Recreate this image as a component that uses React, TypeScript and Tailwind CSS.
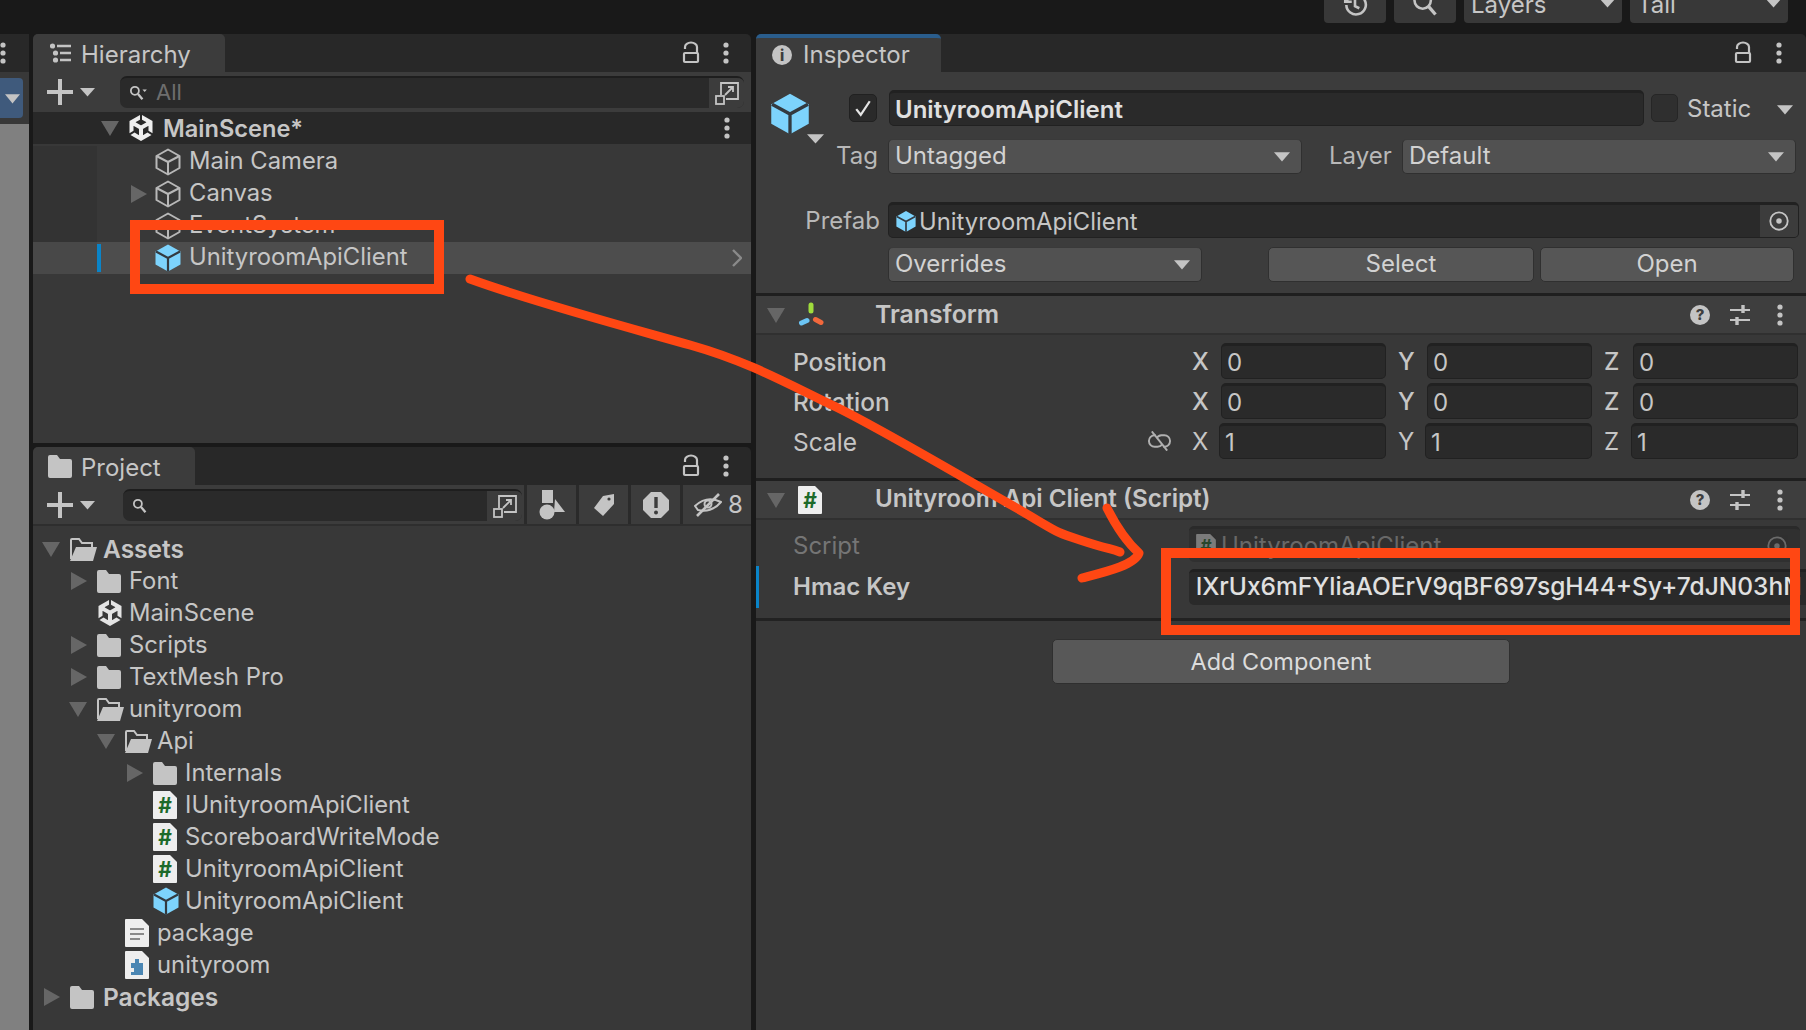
import type { ReactNode } from "react";
import { SiUnity } from "react-icons/si";

const Kebab = ({ className = "" }: { className?: string }) => (
  <svg viewBox="0 0 8 24" className={`w-[8px] h-[24px] ${className}`} fill="#c4c4c4">
    <circle cx="4" cy="4" r="2.6" />
    <circle cx="4" cy="12" r="2.6" />
    <circle cx="4" cy="20" r="2.6" />
  </svg>
);

const Lock = () => (
  <svg viewBox="0 0 18 24" className="w-[18px] h-[24px]" fill="none" stroke="#c4c4c4" strokeWidth="2.2">
    <path d="M3 8 V6 a6 4.5 0 0 1 12 0 V12" />
    <rect x="2" y="12" width="14" height="9" rx="1" />
  </svg>
);

const TriDown = ({ className = "w-[18px] h-[18px]", color = "#666666" }: { className?: string; color?: string }) => (
  <svg viewBox="0 0 18 18" className={className} fill={color} preserveAspectRatio="none">
    <path d="M0 2 H18 L9 17 Z" />
  </svg>
);

const TriRight = ({ className = "" }: { className?: string }) => (
  <svg viewBox="0 0 16 18" className={`w-[16px] h-[18px] ${className}`} fill="#666666">
    <path d="M0 0 L16 9 L0 18 Z" />
  </svg>
);

const CubeOutline = () => (
  <svg viewBox="0 0 26 28" className="w-[26px] h-[28px]" fill="none" stroke="#b8b8b8" strokeWidth="2" strokeLinejoin="round">
    <path d="M13 1.5 L24.5 8 V20 L13 26.5 L1.5 20 V8 Z" />
    <path d="M1.5 8 L13 14 L24.5 8 M13 14 V26.5" />
  </svg>
);

const CubeBlue = ({ className = "w-[26px] h-[28px]" }: { className?: string }) => (
  <svg viewBox="0 0 26 28" className={className}>
    <path d="M13 0.5 L25.5 7.5 V20.5 L13 27.5 L0.5 20.5 V7.5 Z" fill="#7dd3fc" />
    <path d="M1 7.5 L13 14 L25 7.5 M13 14 V27.5" fill="none" stroke="#333a40" strokeWidth="2.2" />
  </svg>
);

const Folder = () => (
  <svg viewBox="0 0 24 24" className="w-[24px] h-[24px]" fill="#c4c4c4">
    <path d="M0 3 Q0 1 2 1 H9 L12 5 H22 Q24 5 24 7 V22 Q24 24 22 24 H2 Q0 24 0 22 Z" />
  </svg>
);

const FolderOpen = () => (
  <svg viewBox="0 0 28 24" className="w-[28px] h-[24px]">
    <path d="M1 22 V3 Q1 2 2 2 H9 L12 6 H22 V10" fill="none" stroke="#c4c4c4" strokeWidth="2" />
    <path d="M6 10 H27 L23 24 H0 Z" fill="#c4c4c4" />
  </svg>
);

const ScriptPage = ({ className = "w-[24px] h-[28px]", page = "#eeeeee", ink = "#1d6a2a" }: { className?: string; page?: string; ink?: string }) => (
  <svg viewBox="0 0 24 28" className={className}>
    <path d="M1 0 H17 L24 7 V27 Q24 28 23 28 H1 Q0 28 0 27 V1 Q0 0 1 0 Z" fill={page} />
    <text x="12" y="22" textAnchor="middle" fontSize="21" fontWeight="700" fontFamily="Inter, sans-serif" fill={ink}>
      #
    </text>
  </svg>
);

const TextPage = () => (
  <svg viewBox="0 0 24 28" className="w-[24px] h-[28px]">
    <path d="M1 0 H17 L24 7 V27 Q24 28 23 28 H1 Q0 28 0 27 V1 Q0 0 1 0 Z" fill="#eeeeee" />
    <path d="M5 10 H19 M5 15 H19 M5 20 H15" stroke="#8a8a8a" strokeWidth="2" />
  </svg>
);

const PackagePage = () => (
  <svg viewBox="0 0 24 28" className="w-[24px] h-[28px]">
    <path d="M1 0 H17 L24 7 V27 Q24 28 23 28 H1 Q0 28 0 27 V1 Q0 0 1 0 Z" fill="#eeeeee" />
    <path d="M10 8 H14 V12 H18 V24 H6 V21 H9 V17 H6 V12 H10 Z" fill="#4a86b3" />
  </svg>
);

const SearchGlass = ({ arrow }: { arrow?: boolean }) => (
  <svg viewBox="0 0 20 18" className="w-[18px] h-[16px]" fill="none" stroke="#c4c4c4" strokeWidth="2">
    <circle cx="6.5" cy="6.5" r="4.5" />
    <path d="M10 10 L15 16" strokeWidth="2.6" />
    {arrow && <path d="M15 5 H20 L17.5 8 Z" fill="#c4c4c4" stroke="none" />}
  </svg>
);

const ExpandBox = () => (
  <svg viewBox="0 0 24 24" className="w-[24px] h-[24px]" fill="none" stroke="#c4c4c4" strokeWidth="1.8">
    <path d="M6 14 V2 H23 V18 H11" />
    <rect x="1" y="15" width="8" height="8" />
    <path d="M10 14 L18 6 M13 6 H18 V11" />
  </svg>
);

const Target = ({ dim }: { dim?: boolean }) => (
  <svg viewBox="0 0 24 24" className={`w-[22px] h-[22px] ${dim ? "opacity-40" : ""}`} fill="none" stroke="#c4c4c4" strokeWidth="2">
    <circle cx="12" cy="12" r="9.5" />
    <circle cx="12" cy="12" r="3" fill="#c4c4c4" stroke="none" />
  </svg>
);

const HelpDot = () => (
  <div className="w-[20px] h-[20px] rounded-full bg-[#c4c4c4] flex items-center justify-center text-[#3e3e3e] text-[15px] font-extrabold leading-none">
    ?
  </div>
);

const Sliders = () => (
  <svg viewBox="0 0 20 20" className="w-[20px] h-[20px]" stroke="#c4c4c4" strokeWidth="2" fill="none">
    <path d="M0 5 H20 M0 15 H20" />
    <path d="M13 0 V8 M7 12 V20" strokeWidth="3.4" />
  </svg>
);

const ComponentTools = () => (
  <div className="ml-auto flex items-center pr-[22px]">
    <HelpDot />
    <div className="ml-[20px]">
      <Sliders />
    </div>
    <Kebab className="ml-[26px]" />
  </div>
);

function PanelTab({ icon, label, tabClass, children }: { icon: ReactNode; label: string; tabClass: string; children?: ReactNode }) {
  return (
    <div className="h-[38px] bg-[#282828] rounded-t-[5px] flex shrink-0">
      <div className={`flex items-center bg-[#3c3c3c] rounded-t-[5px] h-full ${tabClass}`}>
        {icon}
        <span className="text-[24px] pt-[3px]">{label}</span>
      </div>
      <div className="ml-auto flex items-center gap-[22px] pr-[21px]">
        <Lock />
        <Kebab />
        {children}
      </div>
    </div>
  );
}

function AddMenu() {
  return (
    <div className="flex items-center w-[80px] shrink-0 pl-[14px]">
      <svg viewBox="0 0 26 26" className="w-[26px] h-[26px]" stroke="#c4c4c4" strokeWidth="4">
        <path d="M13 0 V26 M0 13 H26" />
      </svg>
      <TriDown className="ml-[7px] w-[15px] h-[10px]" color="#c4c4c4" />
    </div>
  );
}

function SearchField({ className, placeholder, arrow }: { className: string; placeholder?: string; arrow?: boolean }) {
  return (
    <div className={`h-[32px] flex items-center rounded-[7px] bg-[#2a2a2a] border-t-2 border-[#1e1e1e] overflow-hidden ${className}`}>
      <div className="pl-[9px]">
        <SearchGlass arrow={arrow} />
      </div>
      <span className="ml-[9px] pb-[2px] text-[22px] text-[#6e6e6e]">{placeholder}</span>
      <div className="ml-auto h-full w-[35px] bg-[#3c3c3c] flex items-center justify-center">
        <ExpandBox />
      </div>
    </div>
  );
}

type TreeItem = { pad: string; text: string; icon: ReactNode; open?: boolean; arrow?: boolean; bold?: boolean };

const projectTree: TreeItem[] = [
  { pad: "pl-[9px]", text: "Assets", icon: <FolderOpen />, open: true, arrow: true, bold: true },
  { pad: "pl-[36px]", text: "Font", icon: <Folder />, arrow: true },
  { pad: "pl-[36px]", text: "MainScene", icon: <SiUnity className="w-[26px] h-[28px] text-[#e4e4e4]" /> },
  { pad: "pl-[36px]", text: "Scripts", icon: <Folder />, arrow: true },
  { pad: "pl-[36px]", text: "TextMesh Pro", icon: <Folder />, arrow: true },
  { pad: "pl-[36px]", text: "unityroom", icon: <FolderOpen />, open: true, arrow: true },
  { pad: "pl-[64px]", text: "Api", icon: <FolderOpen />, open: true, arrow: true },
  { pad: "pl-[92px]", text: "Internals", icon: <Folder />, arrow: true },
  { pad: "pl-[92px]", text: "IUnityroomApiClient", icon: <ScriptPage /> },
  { pad: "pl-[92px]", text: "ScoreboardWriteMode", icon: <ScriptPage /> },
  { pad: "pl-[92px]", text: "UnityroomApiClient", icon: <ScriptPage /> },
  { pad: "pl-[92px]", text: "UnityroomApiClient", icon: <CubeBlue /> },
  { pad: "pl-[64px]", text: "package", icon: <TextPage /> },
  { pad: "pl-[64px]", text: "unityroom", icon: <PackagePage /> },
  { pad: "pl-[9px]", text: "Packages", icon: <Folder />, arrow: true, bold: true },
];

function TreeRow({ item }: { item: TreeItem }) {
  return (
    <div className={`h-[32px] flex items-center ${item.pad}`}>
      <div className="w-[28px] shrink-0">{item.arrow && (item.open ? <TriDown /> : <TriRight className="ml-[2px]" />)}</div>
      <div className={`shrink-0 flex ${item.bold ? "w-[33px]" : "w-[32px]"}`}>{item.icon}</div>
      <span className={`whitespace-nowrap ${item.bold ? "font-semibold text-[24.5px]" : "text-[23.8px]"}`}>{item.text}</span>
    </div>
  );
}

function HierarchyRow({ icon, text, arrow, selected }: { icon: ReactNode; text: string; arrow?: boolean; selected?: boolean }) {
  return (
    <div className={`h-[32px] flex items-center ${selected ? "bg-[#4d4d4d]" : ""}`}>
      <div className={`w-[64px] h-full shrink-0 ${selected ? "bg-[#484848]" : "bg-[#333333]"}`} />
      <div className={`w-[4px] h-[28px] shrink-0 ${selected ? "bg-[#0a84c8]" : ""}`} />
      <div className="w-[26px] shrink-0" />
      <div className="w-[28px] shrink-0">{arrow && <TriRight className="ml-[4px]" />}</div>
      <div className="w-[34px] shrink-0 flex">{icon}</div>
      <span className="text-[23.8px] whitespace-nowrap pb-[3px]">{text}</span>
      {selected && (
        <svg viewBox="0 0 10 18" className="ml-auto mr-[9px] w-[10px] h-[18px]" fill="none" stroke="#8a8a8a" strokeWidth="2.4">
          <path d="M1 1 L9 9 L1 17" />
        </svg>
      )}
    </div>
  );
}

function Dropdown({ label, className }: { label: string; className: string }) {
  return (
    <div className={`h-[35px] flex items-center rounded-[5px] bg-[#515151] border border-[#303030] border-t-[#3a3a3a] pl-[6px] pr-[11px] ${className}`}>
      <span className="text-[24px] pb-[2px] text-[#d2d2d2]">{label}</span>
      <TriDown className="ml-auto w-[16px] h-[11px]" color="#c4c4c4" />
    </div>
  );
}

function Vector3({ label, values, tall, muted, linkIcon }: { label: string; values: string[]; tall?: boolean; muted?: boolean; linkIcon?: boolean }) {
  const axes = ["X", "Y", "Z"];
  return (
    <div className="h-[36px] mb-[4px] flex items-center pl-[37px]">
      <span className={`w-[354px] shrink-0 text-[24.5px] pt-[2px] ${muted ? "font-normal" : "font-medium"}`}>{label}</span>
      <div className="w-[45px] shrink-0 flex justify-end pr-[20px]">
        {linkIcon && (
          <svg viewBox="0 0 26 20" className="w-[25px] h-[20px]" fill="none" stroke="#b0b0b0" strokeWidth="2">
            <path d="M9 4 H8 a6 6 0 0 0 0 12 H11 a6 6 0 0 0 5 -3 M17 16 H18 a6 6 0 0 0 0 -12 H15 a6 6 0 0 0 -5 3" />
            <path d="M5 0 L21 20" />
          </svg>
        )}
      </div>
      {axes.map((axis, i) => (
        <div key={axis} className="w-[206px] shrink-0 flex items-center">
          <span className={`shrink-0 text-[24px] pt-[2px] ${tall ? "w-[27px]" : "w-[29px]"} ${muted ? "font-normal" : "font-medium"}`}>{axis}</span>
          <div className={`h-[36px] flex items-center pl-[5px] pt-[2px] rounded-[5px] bg-[#2a2a2a] border border-[#212121] border-t-[3px] text-[24px] ${tall ? "w-[167px]" : "w-[165px]"}`}>
            {values[i]}
          </div>
        </div>
      ))}
    </div>
  );
}

function ComponentHeader({ icon, title, titleClass }: { icon: ReactNode; title: string; titleClass: string }) {
  return (
    <div className="h-[40px] bg-[#3e3e3e] border-t-[3px] border-[#1f1f1f] flex items-center shrink-0 pl-[11px]">
      <TriDown />
      <div className="ml-[13px] w-[77px] shrink-0 flex">{icon}</div>
      <span className={`font-semibold whitespace-nowrap ${titleClass}`}>{title}</span>
      <ComponentTools />
    </div>
  );
}

export default function App() {
  return (
    <div className="relative w-[1806px] h-[1030px] overflow-hidden bg-[#191919] text-[#c6c6c6] flex flex-col font-['Inter',sans-serif]">
      {/* top toolbar, cut off by the crop */}
      <div className="h-[34px] shrink-0 flex justify-end gap-[8px] pr-[18px]">
        <div className="w-[62px] h-[23px] rounded-b-[4px] bg-[#383838] flex items-end justify-center overflow-hidden">
          <svg viewBox="0 0 24 24" className="w-[26px] h-[26px] mb-[5px] shrink-0" fill="none" stroke="#c4c4c4" strokeWidth="2.4">
            <path d="M4 12 a9 9 0 1 0 3 -7 L3 9 M3 3 V9 H9" />
            <path d="M12 7 V13 L16 15" />
          </svg>
        </div>
        <div className="w-[62px] h-[23px] rounded-b-[4px] bg-[#383838] flex items-end justify-center overflow-hidden">
          <svg viewBox="0 0 24 24" className="w-[28px] h-[28px] mb-[5px] shrink-0" fill="none" stroke="#c4c4c4" strokeWidth="2.2">
            <circle cx="10" cy="9" r="7" />
            <path d="M15 14 L21 21" strokeWidth="2.8" />
          </svg>
        </div>
        <div className="w-[158px] h-[23px] rounded-b-[4px] bg-[#383838] flex items-end px-[7px] overflow-hidden">
          <span className="text-[24px] leading-[30px] mb-[3px]">Layers</span>
          <TriDown className="ml-auto mb-[15px] w-[15px] h-[10px]" color="#c4c4c4" />
        </div>
        <div className="w-[158px] h-[23px] rounded-b-[4px] bg-[#383838] flex items-end px-[7px] overflow-hidden">
          <span className="text-[24px] leading-[30px] mb-[3px]">Tall</span>
          <TriDown className="ml-auto mb-[15px] w-[15px] h-[10px]" color="#c4c4c4" />
        </div>
      </div>

      <div className="flex-1 flex min-h-0">
        {/* neighbouring scene panel, only its edge is visible */}
        <div className="w-[29px] shrink-0 flex flex-col">
          <div className="h-[38px] bg-[#282828] flex items-center overflow-hidden">
            <Kebab className="-ml-[1px]" />
          </div>
          <div className="h-[52px] bg-[#383838] pt-[6px]">
            <div className="w-[23px] h-[40px] rounded-r-[4px] bg-[#3f5a7c] flex items-center justify-end pr-[3px]">
              <TriDown className="w-[15px] h-[11px]" color="#c4c4c4" />
            </div>
          </div>
          <div className="flex-1 bg-[#808080]" />
        </div>

        {/* left column */}
        <div className="w-[718px] ml-[4px] shrink-0 flex flex-col gap-[4px]">
          <div className="h-[409px] shrink-0 flex flex-col">
            <PanelTab
              label="Hierarchy"
              tabClass="w-[192px] pl-[17px]"
              icon={
                <svg viewBox="0 0 22 22" className="w-[22px] h-[22px] mr-[9px]" stroke="#c4c4c4" strokeWidth="2.4" fill="#c4c4c4">
                  <path d="M7 4 H21 M10 11 H21 M10 18 H21" />
                  <circle cx="2.5" cy="4" r="1.4" />
                  <circle cx="5.5" cy="11" r="1.4" />
                  <circle cx="5.5" cy="18" r="1.4" />
                </svg>
              }
            />
            <div className="h-[40px] bg-[#3c3c3c] flex items-center shrink-0">
              <AddMenu />
              <SearchField className="w-[624px] ml-[7px]" placeholder="All" arrow />
            </div>
            <div className="h-[32px] bg-[#282828] flex items-center shrink-0 pl-[68px]">
              <TriDown />
              <div className="w-[35px] ml-[9px] flex">
                <SiUnity className="w-[26px] h-[28px] text-[#eeeeee]" />
              </div>
              <span className="text-[23.6px] pt-[2px] font-semibold">MainScene*</span>
              <Kebab className="ml-auto mr-[20px]" />
            </div>
            <div className="flex-1 bg-[#383838] pt-[2px]">
              <HierarchyRow icon={<CubeOutline />} text="Main Camera" />
              <HierarchyRow icon={<CubeOutline />} text="Canvas" arrow />
              <HierarchyRow icon={<CubeOutline />} text="EventSystem" />
              <HierarchyRow icon={<CubeBlue />} text="UnityroomApiClient" selected />
            </div>
          </div>

          <div className="flex-1 flex flex-col min-h-0">
            <PanelTab
              label="Project"
              tabClass="w-[162px] pl-[15px]"
              icon={
                <svg viewBox="0 0 24 24" className="w-[24px] h-[24px] mr-[9px]" fill="#c4c4c4">
                  <path d="M0 3 Q0 1 2 1 H9 L12 5 H22 Q24 5 24 7 V22 Q24 24 22 24 H2 Q0 24 0 22 Z" />
                </svg>
              }
            />
            <div className="h-[41px] bg-[#3c3c3c] flex items-center shrink-0 border-b-2 border-[#2e2e2e]">
              <AddMenu />
              <SearchField className="w-[399px] ml-[10px]" />
              <div className="ml-[2px] h-full flex divide-x-[3px] divide-[#2a2a2a] border-l-[3px] border-[#2a2a2a]">
                <div className="w-[52px] flex items-center justify-center">
                  <svg viewBox="0 0 26 30" className="w-[26px] h-[30px]" fill="#c4c4c4">
                    <rect x="3" y="0" width="11" height="13" />
                    <path d="M16 9 L26 22 H15 Z" />
                    <circle cx="8" cy="22" r="7.5" />
                  </svg>
                </div>
                <div className="w-[52px] flex items-center justify-center">
                  <svg viewBox="0 0 22 24" className="w-[22px] h-[24px]" fill="#c4c4c4">
                    <path d="M10 3 L21 1 V11 L10 23 L1 15 Z" />
                    <circle cx="16" cy="6" r="1.6" fill="#3c3c3c" />
                  </svg>
                </div>
                <div className="w-[52px] flex items-center justify-center">
                  <svg viewBox="0 0 26 26" className="w-[26px] h-[26px]">
                    <path d="M8 0 H18 L26 8 V18 L18 26 H8 L0 18 V8 Z" fill="#c4c4c4" />
                    <path d="M13 5 V16" stroke="#3c3c3c" strokeWidth="3.4" />
                    <circle cx="13" cy="20.5" r="2" fill="#3c3c3c" />
                  </svg>
                </div>
                <div className="flex-1 flex items-center pl-[11px] gap-[6px] w-[64px]">
                  <svg viewBox="0 0 28 24" className="w-[28px] h-[24px] shrink-0" fill="none" stroke="#c4c4c4" strokeWidth="2">
                    <path d="M1 13 Q13 2 27 9 Q18 20 4 17 Z" />
                    <circle cx="14" cy="11" r="3.5" />
                    <path d="M3 23 L25 1" strokeWidth="2.6" />
                  </svg>
                  <span className="text-[24px]">8</span>
                </div>
              </div>
            </div>
            <div className="flex-1 bg-[#383838] pt-[7px] overflow-hidden">
              {projectTree.map((item, i) => (
                <TreeRow key={i} item={item} />
              ))}
            </div>
          </div>
        </div>

        {/* inspector */}
        <div className="flex-1 ml-[5px] min-w-0 flex flex-col">
          <div className="h-[38px] bg-[#282828] flex shrink-0 rounded-t-[5px]">
            <div className="w-[185px] flex items-center pl-[16px] bg-[#3c3c3c] border-t-[4px] border-[#2a5d8c] rounded-t-[5px]">
              <div className="w-[20px] h-[20px] rounded-full bg-[#c4c4c4] flex items-center justify-center text-[#3c3c3c] text-[15px] font-extrabold leading-none mr-[11px]">
                i
              </div>
              <span className="text-[24px]">Inspector</span>
            </div>
            <div className="ml-auto flex items-center gap-[23px] pr-[23px]">
              <Lock />
              <Kebab />
            </div>
          </div>

          <div className="h-[221px] shrink-0 bg-[#3c3c3c] flex flex-col">
            <div className="h-[36px] mt-[18px] flex items-start shrink-0">
              <div className="relative ml-[14px] mt-[3px] w-[40px] h-[42px] shrink-0">
                <CubeBlue className="w-[40px] h-[42px]" />
                <TriDown className="absolute left-[37px] top-[40px] w-[17px] h-[11px]" color="#c4c4c4" />
              </div>
              <div className="ml-[39px] mt-[4px] w-[28px] h-[28px] rounded-[5px] bg-[#2a2a2a] border border-[#212121] flex items-center justify-center">
                <svg viewBox="0 0 16 16" className="w-[18px] h-[18px]" fill="none" stroke="#e4e4e4" strokeWidth="2">
                  <path d="M2 9 L6 14 L14 2" />
                </svg>
              </div>
              <div className="ml-[12px] w-[755px] h-[36px] rounded-[5px] bg-[#2a2a2a] border border-[#212121] border-t-[3px] flex items-center pl-[5px] pt-[2px]">
                <span className="text-[24px] font-semibold text-[#e0e0e0]">UnityroomApiClient</span>
              </div>
              <div className="ml-[7px] mt-[4px] w-[27px] h-[28px] rounded-[5px] bg-[#2f2f2f] border border-[#262626]" />
              <span className="ml-[9px] text-[24px] leading-[38px]">Static</span>
              <TriDown className="ml-[26px] mt-[14px] w-[16px] h-[11px]" color="#c4c4c4" />
            </div>

            <div className="h-[35px] mt-[13px] flex items-center shrink-0">
              <span className="w-[122px] text-right pb-[2px] text-[24px] text-[#b8b8b8]">Tag</span>
              <Dropdown label="Untagged" className="ml-[10px] w-[414px]" />
              <span className="ml-[27px] w-[73px] shrink-0 pb-[2px] text-[24px] text-[#b8b8b8]">Layer</span>
              <Dropdown label="Default" className="w-[394px]" />
            </div>

            <div className="h-[36px] mt-[28px] flex items-center shrink-0">
              <span className="w-[124px] text-right pt-[2px] text-[24px] text-[#b8b8b8]">Prefab</span>
              <div className="ml-[8px] w-[911px] h-[36px] rounded-[5px] bg-[#2a2a2a] border border-[#212121] border-t-[3px] flex items-center pl-[7px] overflow-hidden">
                <CubeBlue className="w-[20px] h-[23px] shrink-0" />
                <span className="ml-[3px] pt-[1px] text-[23.8px]">UnityroomApiClient</span>
                <div className="ml-auto w-[38px] h-full bg-[#3c3c3c] flex items-center justify-center">
                  <Target />
                </div>
              </div>
            </div>

            <div className="h-[35px] mt-[9px] flex items-center shrink-0">
              <Dropdown label="Overrides" className="ml-[132px] w-[314px]" />
              <div className="ml-[66px] w-[266px] h-[35px] rounded-[5px] bg-[#565656] border border-[#303030] flex items-center justify-center pb-[2px] text-[24px] text-[#d2d2d2]">
                Select
              </div>
              <div className="ml-[6px] w-[254px] h-[35px] rounded-[5px] bg-[#565656] border border-[#303030] flex items-center justify-center pb-[2px] text-[24px] text-[#d2d2d2]">
                Open
              </div>
            </div>
          </div>

          <ComponentHeader
            title="Transform"
            titleClass="text-[24.8px]"
            icon={
              <svg viewBox="0 0 28 28" className="w-[28px] h-[28px]" fill="none" strokeWidth="5" strokeLinecap="round">
                <path d="M13 4 V10" stroke="#9fdc3c" />
                <path d="M3.5 22 L9 19.5" stroke="#6cc5f5" />
                <path d="M17.5 18.5 L23 21.5" stroke="#f2683c" />
              </svg>
            }
          />
          <div className="h-[145px] shrink-0 bg-[#383838] pt-[8px] border-t-2 border-[#303030]">
            <Vector3 label="Position" values={["0", "0", "0"]} />
            <Vector3 label="Rotation" values={["0", "0", "0"]} />
            <Vector3 label="Scale" values={["1", "1", "1"]} tall muted linkIcon />
          </div>

          <ComponentHeader title="Unityroom Api Client (Script)" titleClass="text-[24.2px]" icon={<ScriptPage className="w-[24px] h-[28px]" />} />
          <div className="h-[100px] shrink-0 bg-[#383838] border-t-2 border-[#303030] pt-[6px]">
            <div className="h-[36px] flex items-center pl-[37px]">
              <span className="w-[396px] shrink-0 text-[24px] pt-[4px] text-[#757575]">Script</span>
              <div className="flex-1 mr-[6px] h-[36px] rounded-[5px] bg-[#303030] border-t-[3px] border-[#2a2a2a] flex items-center pl-[7px] overflow-hidden">
                <ScriptPage className="w-[20px] h-[23px] shrink-0 opacity-40" />
                <span className="ml-[5px] text-[24px] text-[#686868]">UnityroomApiClient</span>
                <div className="ml-auto w-[42px] pr-[4px] flex justify-center">
                  <Target dim />
                </div>
              </div>
            </div>
            <div className="h-[42px] mt-[4px] flex items-center">
              <div className="w-[3px] h-full bg-[#0a84c8] shrink-0" />
              <span className="ml-[34px] w-[396px] shrink-0 text-[24px] font-semibold">Hmac Key</span>
              <div className="flex-1 min-w-0 h-[36px] rounded-l-[5px] bg-[#2a2a2a] border-t-[3px] border-[#212121] flex items-center pl-[7px] overflow-hidden">
                <span className="text-[24.5px] font-medium text-[#e0e0e0] whitespace-nowrap pb-[4px]">lXrUx6mFYliaAOErV9qBF697sgH44+Sy+7dJN03hN</span>
              </div>
            </div>
          </div>

          <div className="flex-1 bg-[#383838] border-t-[3px] border-[#222222] pt-[18px] flex justify-center">
            <div className="w-[458px] h-[45px] rounded-[5px] bg-[#585858] border border-[#2f2f2f] flex items-center justify-center text-[23.5px] text-[#dcdcdc]">
              Add Component
            </div>
          </div>
        </div>
      </div>

      {/* hand-drawn annotations laid over the editor */}
      <div className="absolute left-[130px] top-[220px] w-[314px] h-[74px] border-[10px] border-[#ff4713]" />
      <div className="absolute left-[1161px] top-[548px] w-[639px] h-[87px] border-[10px] border-[#ff4713]" />
      <svg className="absolute inset-0 w-[1806px] h-[1030px] pointer-events-none" viewBox="0 0 1806 1030" fill="none" stroke="#ff4713" strokeWidth="9" strokeLinecap="round" strokeLinejoin="round">
        <path d="M470 279 C 533 302, 630 328, 690 345 S 790 385, 832 405 S 950 470, 1006 502 S 1050 530, 1080 540 S 1110 548, 1120 552" />
        <path d="M1107 508 C 1118 530, 1130 545, 1139 553 C 1135 565, 1105 572, 1082 578" />
      </svg>
    </div>
  );
}
